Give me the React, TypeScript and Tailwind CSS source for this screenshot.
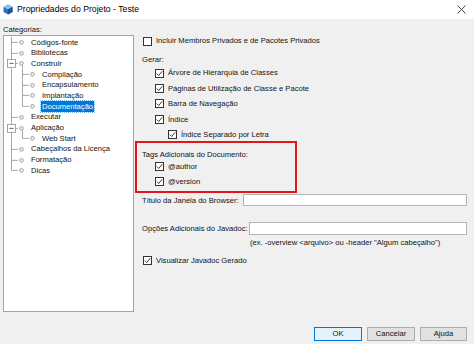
import React from 'react';

type TreeItem = {
  label: string;
  level: 0 | 1;
  last?: boolean;
  expander?: boolean;
  open?: boolean;
  selected?: boolean;
};

const treeItems: TreeItem[] = [
  { label: 'Códigos-fonte', level: 0 },
  { label: 'Bibliotecas', level: 0 },
  { label: 'Construir', level: 0, expander: true, open: true },
  { label: 'Compilação', level: 1 },
  { label: 'Encapsulamento', level: 1 },
  { label: 'Implantação', level: 1 },
  { label: 'Documentação', level: 1, last: true, selected: true },
  { label: 'Executar', level: 0 },
  { label: 'Aplicação', level: 0, expander: true, open: true },
  { label: 'Web Start', level: 1, last: true },
  { label: 'Cabeçalhos da Licença', level: 0 },
  { label: 'Formatação', level: 0 },
  { label: 'Dicas', level: 0, last: true },
];

const LINE = '#a6a6a6';

function TreeGuides({ item }: { item: TreeItem }) {
  const h = 10.7;
  const c = h / 2;
  const w = item.level === 0 ? 22 : 33;
  return (
    <svg width={w} height={h} viewBox={`0 0 ${w} ${h}`} className="shrink-0">
      {item.level === 0 ? (
        <>
          <line x1={7.5} y1={0} x2={7.5} y2={item.last ? c : h} stroke={LINE} strokeWidth={1} />
          <line x1={7.5} y1={c} x2={14} y2={c} stroke={LINE} strokeWidth={1} />
          {item.open && <line x1={18.5} y1={c + 2} x2={18.5} y2={h} stroke={LINE} strokeWidth={1} />}
          {item.expander && (
            <>
              <rect x={3.5} y={c - 4} width={8} height={8} fill="#fff" stroke="#8c8c8c" strokeWidth={0.8} />
              <line x1={5.5} y1={c} x2={9.5} y2={c} stroke="#333" strokeWidth={0.8} />
            </>
          )}
          <circle cx={17.5} cy={c} r={1.9} fill="#e9e9e9" stroke="#979797" strokeWidth={0.8} />
        </>
      ) : (
        <>
          <line x1={7.5} y1={0} x2={7.5} y2={h} stroke={LINE} strokeWidth={1} />
          <line x1={18.5} y1={0} x2={18.5} y2={item.last ? c : h} stroke={LINE} strokeWidth={1} />
          <line x1={18.5} y1={c} x2={25} y2={c} stroke={LINE} strokeWidth={1} />
          <circle cx={28.5} cy={c} r={1.9} fill="#e9e9e9" stroke="#979797" strokeWidth={0.8} />
        </>
      )}
    </svg>
  );
}

function CheckBox({ checked }: { checked: boolean }) {
  return (
    <span className="w-[9px] h-[9px] shrink-0 border border-[#333333] bg-white flex items-center justify-center">
      {checked && (
        <svg width="7" height="7" viewBox="0 0 7 7">
          <polyline points="0.8,3.6 2.7,5.5 6.3,1.2" fill="none" stroke="#222" strokeWidth="0.9" />
        </svg>
      )}
    </span>
  );
}

function CheckRow({ label, checked, className }: { label: string; checked: boolean; className: string }) {
  return (
    <div className={`flex items-center gap-[4px] ${className}`}>
      <CheckBox checked={checked} />
      <span className="leading-none whitespace-nowrap">{label}</span>
    </div>
  );
}

export default function App() {
  return (
    <div className="w-[474px] h-[344px] flex flex-col bg-[#f0f0f0] text-[7.6px] text-[#111] font-['Liberation_Sans',Arial,sans-serif] overflow-hidden">
      {/* title bar */}
      <div className="h-[19px] bg-white flex items-center shrink-0">
        <svg width="10" height="11" viewBox="0 0 10 11" className="ml-[3px]">
          <polygon points="5,0.5 9.5,3 9.5,8 5,10.5 0.5,8 0.5,3" fill="#2f6fb5" />
          <polygon points="5,0.5 9.5,3 5,5.5 0.5,3" fill="#8cc0ee" />
          <polygon points="5,5.5 9.5,3 9.5,8 5,10.5" fill="#1d5496" />
        </svg>
        <span className="ml-[4px] text-[8.7px] text-black leading-none">Propriedades do Projeto - Teste</span>
        <div className="flex-1" />
        <svg width="9" height="9" viewBox="0 0 9 9" className="mr-[8px]">
          <path d="M0.5 0.5 L8.5 8.5 M8.5 0.5 L0.5 8.5" stroke="#333" strokeWidth="0.9" />
        </svg>
      </div>

      {/* content */}
      <div className="h-[293px] flex shrink-0">
        <div className="ml-[3px] w-[131px] flex flex-col pt-[5px]">
          <div className="h-[11px] flex items-center leading-none">Categorias:</div>
          <div className="h-[277px] bg-white border border-[#a3a3a3] pt-[1px]">
            {treeItems.map((item) => (
              <div key={item.label} className="h-[10.7px] flex items-center">
                <TreeGuides item={item} />
                <span
                  className={`ml-[4px] leading-none whitespace-nowrap px-[1px] py-[1.5px] ${
                    item.selected ? 'bg-[#0078d7] text-white outline outline-1 outline-dotted outline-[#7fb3e6]' : ''
                  }`}
                >
                  {item.label}
                </span>
              </div>
            ))}
          </div>
        </div>

        <div className="flex-1 flex flex-col pt-[16px] pr-[7px]">
          <CheckRow className="h-[12px] pl-[9px]" checked={false} label="Incluir Membros Privados e de Pacotes Privados" />
          <div className="mt-[7.5px] h-[11px] pl-[8px] flex items-center leading-none">Gerar:</div>
          <CheckRow className="h-[15.4px] pl-[21px]" checked label="Árvore de Hierarquia de Classes" />
          <CheckRow className="h-[15.4px] pl-[21px]" checked label="Páginas de Utilização de Classe e Pacote" />
          <CheckRow className="h-[15.4px] pl-[21px]" checked label="Barra de Navegação" />
          <CheckRow className="h-[15.4px] pl-[21px]" checked label="Índice" />
          <CheckRow className="h-[15.4px] pl-[34px]" checked label="Índice Separado por Letra" />

          <div className="mt-[-1.5px] ml-[1px] w-[162px] border-2 border-[#e3161d] pt-[6px] pb-[2px]">
            <div className="h-[11px] pl-[5px] flex items-center leading-none">Tags Adicionais do Documento:</div>
            <CheckRow className="h-[14px] pl-[18px]" checked label="@author" />
            <CheckRow className="h-[15px] pl-[18px]" checked label="@version" />
          </div>

          <div className="mt-[1.5px] h-[12px] flex items-center">
            <span className="w-[109px] pl-[8px] leading-none whitespace-nowrap">Título da Janela do Browser:</span>
            <div className="flex-1 h-[12px] bg-white border border-[#b4b4b4]" />
          </div>

          <div className="mt-[15.7px] h-[13px] flex items-center">
            <span className="w-[115px] pl-[8px] leading-none whitespace-nowrap">Opções Adicionais do Javadoc:</span>
            <div className="flex-1 h-[13px] bg-white border border-[#b4b4b4]" />
          </div>

          <div className="mt-[3px] h-[10px] pl-[116px] flex items-center leading-none whitespace-nowrap">
            (ex. -overview &lt;arquivo&gt; ou -header "Algum cabeçalho")
          </div>

          <CheckRow className="mt-[6.7px] h-[12px] pl-[9px]" checked label="Visualizar Javadoc Gerado" />
        </div>
      </div>

      {/* buttons */}
      <div className="mt-[15px] h-[14px] flex justify-end gap-[5px] pr-[7px] shrink-0">
        <button className="w-[48px] h-[14px] border border-[#0078d7] bg-[#e5f1fb] leading-none">OK</button>
        <button className="w-[48px] h-[14px] border border-[#adadad] bg-[#e1e1e1] leading-none">Cancelar</button>
        <button className="w-[47px] h-[14px] border border-[#adadad] bg-[#e1e1e1] leading-none">Ajuda</button>
      </div>
    </div>
  );
}
